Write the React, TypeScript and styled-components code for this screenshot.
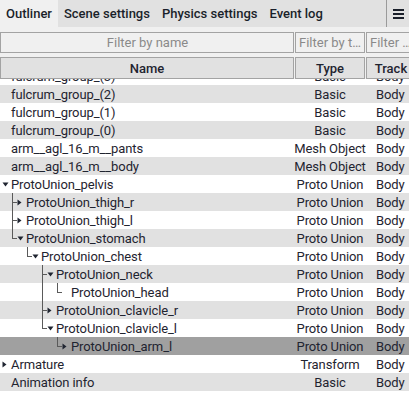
import { useLayoutEffect, useRef } from 'react';
import { createGlobalStyle, styled } from 'styled-components';

const GlobalStyle = createGlobalStyle`
  html, body {
    margin: 0;
    padding: 0;
    background: #f0f0f0;
  }
  body {
    font-family: Roboto, 'Liberation Sans', sans-serif;
    font-size: 13px;
    color: #1f2430;
  }
`;

const COLUMNS = '294px 70px 50px';

const Panel = styled.div`
  width: 409px;
  height: 394px;
  overflow: hidden;
  display: flex;
  flex-direction: column;
  background: #f0f0f0;
`;

const TabBar = styled.div`
  display: flex;
  align-items: stretch;
  height: 27px;
  background: #e1e1e1;
  flex-shrink: 0;
`;

interface TabProps {
  $active?: boolean;
}

const Tab = styled.div<TabProps>`
  display: flex;
  align-items: center;
  padding: 0 6px;
  font-weight: 500;
  font-size: 13px;
  color: #1a1f2a;
  background: ${({ $active }) => ($active ? '#f0f0f0' : 'transparent')};
`;

const MenuButton = styled.div`
  margin-left: auto;
  width: 22px;
  border-left: 1px solid #9a9a9a;
  display: flex;
  align-items: center;
  justify-content: center;
`;

const FilterRow = styled.div`
  display: grid;
  grid-template-columns: ${COLUMNS};
  column-gap: 1px;
  margin-top: 5px;
  height: 21px;
  flex-shrink: 0;
`;

const FilterInput = styled.input`
  box-sizing: border-box;
  min-width: 0;
  width: 100%;
  height: 100%;
  margin: 0;
  padding: 0 2px 0 3px;
  border: 1px solid #a3a3a3;
  background: #f0f0f0;
  font-family: inherit;
  font-size: 13px;
  text-align: center;
  text-overflow: ellipsis;
  outline: none;

  &::placeholder {
    color: #8a8a8a;
  }
`;

const HeaderRow = styled.div`
  display: grid;
  grid-template-columns: ${COLUMNS};
  column-gap: 1px;
  margin-top: 4px;
  height: 22px;
  flex-shrink: 0;
`;

const HeaderCell = styled.div`
  box-sizing: border-box;
  border: 1px solid #a3a3a3;
  background: #e1e1e1;
  display: flex;
  align-items: center;
  justify-content: center;
  font-weight: 500;
  white-space: nowrap;
  overflow: hidden;
`;

const Body = styled.div`
  flex: 1;
  overflow-y: auto;
  scrollbar-width: none;
  &::-webkit-scrollbar {
    display: none;
  }
`;

interface RowProps {
  $shade: 'light' | 'dark' | 'selected';
}

const Row = styled.div<RowProps>`
  display: grid;
  grid-template-columns: ${COLUMNS};
  column-gap: 1px;
  height: 18px;
  align-items: center;
  white-space: nowrap;
  letter-spacing: -0.1px;
  background: ${({ $shade }) =>
    $shade === 'selected' ? '#a0a0a0' : $shade === 'dark' ? '#e1e1e1' : '#ffffff'};
`;

const NameCell = styled.div`
  display: flex;
  align-items: stretch;
  height: 100%;
  padding-left: 2px;
  overflow: hidden;
`;

interface GuideProps {
  $kind: 'pass' | 'tee' | 'end' | 'blank';
}

const Guide = styled.span<GuideProps>`
  position: relative;
  flex: 0 0 15px;
  width: 15px;

  &::before {
    content: '';
    display: ${({ $kind }) => ($kind === 'blank' ? 'none' : 'block')};
    position: absolute;
    left: 10px;
    top: 0;
    width: 1px;
    height: ${({ $kind }) => ($kind === 'end' ? '9px' : '100%')};
    background: #5a5a5a;
  }

  &::after {
    content: '';
    display: ${({ $kind }) => ($kind === 'tee' || $kind === 'end' ? 'block' : 'none')};
    position: absolute;
    left: 10px;
    top: 9px;
    width: 5px;
    height: 1px;
    background: #5a5a5a;
  }
`;

const Toggle = styled.span`
  flex: 0 0 9px;
  width: 9px;
  display: flex;
  align-items: center;
`;

const Label = styled.span`
  display: flex;
  align-items: center;
`;

// the type column is centred, long names may spill a little past the edges
const TypeCell = styled.div`
  display: flex;
  justify-content: center;
`;

const TrackCell = styled.div`
  padding-left: 10px;
  overflow: hidden;
`;

type Guides = GuideProps['$kind'][];

interface Node {
  name: string;
  type: string;
  guides: Guides;
  toggle?: 'open' | 'closed';
  selected?: boolean;
}

const rows: Node[] = [
  { name: 'fulcrum_group_(5)', type: 'Basic', guides: [] },
  { name: 'fulcrum_group_(4)', type: 'Basic', guides: [] },
  { name: 'fulcrum_group_(3)', type: 'Basic', guides: [] },
  { name: 'fulcrum_group_(2)', type: 'Basic', guides: [] },
  { name: 'fulcrum_group_(1)', type: 'Basic', guides: [] },
  { name: 'fulcrum_group_(0)', type: 'Basic', guides: [] },
  { name: 'arm__agl_16_m__pants', type: 'Mesh Object', guides: [] },
  { name: 'arm__agl_16_m__body', type: 'Mesh Object', guides: [] },
  { name: 'ProtoUnion_pelvis', type: 'Proto Union', guides: [], toggle: 'open' },
  { name: 'ProtoUnion_thigh_r', type: 'Proto Union', guides: ['tee'], toggle: 'closed' },
  { name: 'ProtoUnion_thigh_l', type: 'Proto Union', guides: ['tee'], toggle: 'closed' },
  { name: 'ProtoUnion_stomach', type: 'Proto Union', guides: ['end'], toggle: 'open' },
  { name: 'ProtoUnion_chest', type: 'Proto Union', guides: ['blank', 'end'], toggle: 'open' },
  { name: 'ProtoUnion_neck', type: 'Proto Union', guides: ['blank', 'blank', 'tee'], toggle: 'open' },
  { name: 'ProtoUnion_head', type: 'Proto Union', guides: ['blank', 'blank', 'pass', 'end'] },
  { name: 'ProtoUnion_clavicle_r', type: 'Proto Union', guides: ['blank', 'blank', 'tee'], toggle: 'closed' },
  { name: 'ProtoUnion_clavicle_l', type: 'Proto Union', guides: ['blank', 'blank', 'end'], toggle: 'open' },
  {
    name: 'ProtoUnion_arm_l',
    type: 'Proto Union',
    guides: ['blank', 'blank', 'blank', 'end'],
    toggle: 'closed',
    selected: true,
  },
  { name: 'Armature', type: 'Transform', guides: [], toggle: 'closed' },
  { name: 'Animation info', type: 'Basic', guides: [] },
  { name: 'Camera', type: 'Basic', guides: [] },
];

function Arrow({ open }: { open: boolean }) {
  return open ? (
    <svg width="7" height="5" viewBox="0 0 7 5">
      <path d="M0.5 0.5 H6.5 L3.5 4.5 Z" fill="#1f2430" />
    </svg>
  ) : (
    <svg width="5" height="7" viewBox="0 0 5 7">
      <path d="M0.5 0.5 V6.5 L4.5 3.5 Z" fill="#1f2430" />
    </svg>
  );
}

function MenuIcon() {
  return (
    <svg width="11" height="11" viewBox="0 0 11 11">
      <rect x="0" y="1" width="11" height="2" fill="#1a1f2a" />
      <rect x="0" y="5" width="11" height="2" fill="#1a1f2a" />
      <rect x="0" y="9" width="11" height="2" fill="#1a1f2a" />
    </svg>
  );
}

export default function App() {
  const bodyRef = useRef<HTMLDivElement>(null);

  // the outliner is scrolled a little past the first three groups
  useLayoutEffect(() => {
    if (bodyRef.current) bodyRef.current.scrollTop = 48;
  }, []);

  return (
    <>
      <GlobalStyle />
      <Panel>
        <TabBar>
          <Tab $active>Outliner</Tab>
          <Tab>Scene settings</Tab>
          <Tab>Physics settings</Tab>
          <Tab>Event log</Tab>
          <MenuButton>
            <MenuIcon />
          </MenuButton>
        </TabBar>
        <FilterRow>
          <FilterInput placeholder="Filter by name" />
          <FilterInput placeholder="Filter by type" />
          <FilterInput placeholder="Filter by track" />
        </FilterRow>
        <HeaderRow>
          <HeaderCell>Name</HeaderCell>
          <HeaderCell>Type</HeaderCell>
          <HeaderCell>Track</HeaderCell>
        </HeaderRow>
        <Body ref={bodyRef}>
          {rows.map((row, i) => (
            <Row
              key={row.name}
              $shade={row.selected ? 'selected' : i % 2 === 1 ? 'dark' : 'light'}
            >
              <NameCell>
                {row.guides.map((g, k) => (
                  <Guide key={k} $kind={g} />
                ))}
                <Toggle>{row.toggle && <Arrow open={row.toggle === 'open'} />}</Toggle>
                <Label>{row.name}</Label>
              </NameCell>
              <TypeCell>{row.type}</TypeCell>
              <TrackCell>Body</TrackCell>
            </Row>
          ))}
        </Body>
      </Panel>
    </>
  );
}
